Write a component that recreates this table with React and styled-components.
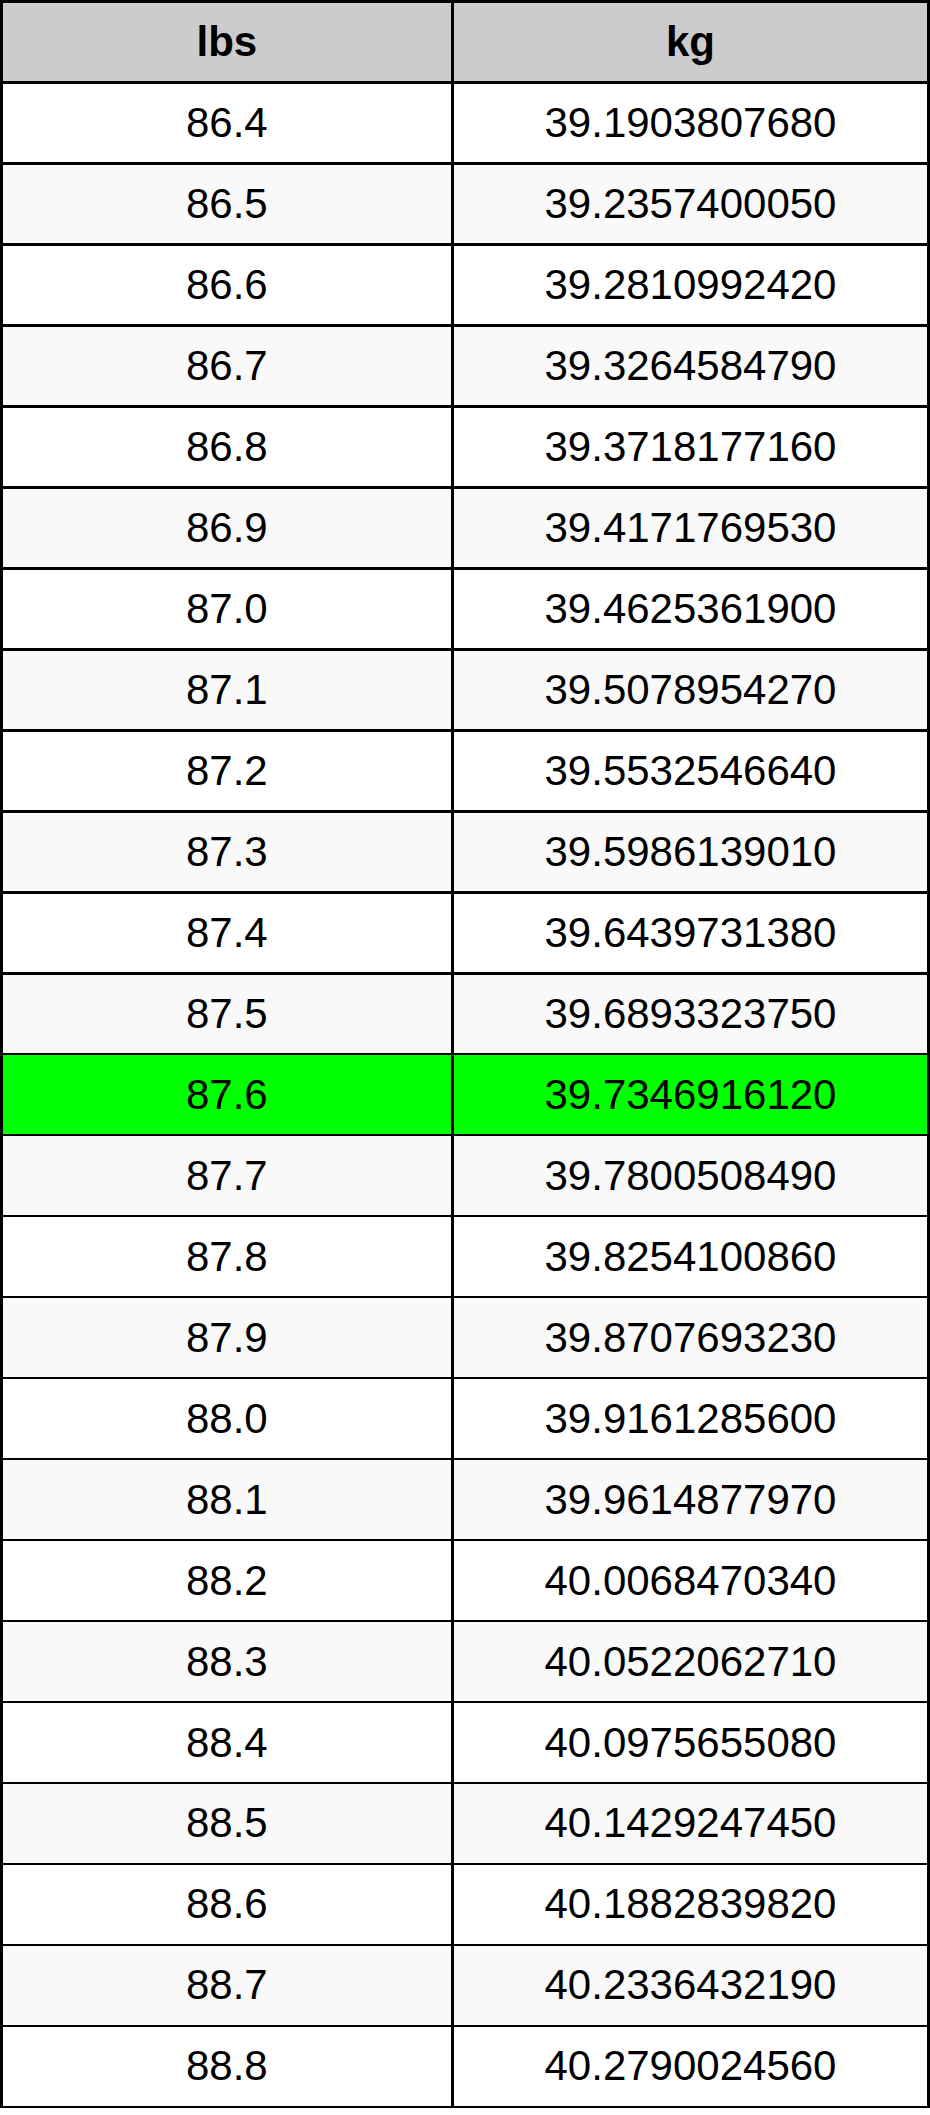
import React from 'react';
import styled, { createGlobalStyle } from 'styled-components';

const rows = [
    ['86.4', '39.1903807680'],
    ['86.5', '39.2357400050'],
    ['86.6', '39.2810992420'],
    ['86.7', '39.3264584790'],
    ['86.8', '39.3718177160'],
    ['86.9', '39.4171769530'],
    ['87.0', '39.4625361900'],
    ['87.1', '39.5078954270'],
    ['87.2', '39.5532546640'],
    ['87.3', '39.5986139010'],
    ['87.4', '39.6439731380'],
    ['87.5', '39.6893323750'],
    ['87.6', '39.7346916120'],
    ['87.7', '39.7800508490'],
    ['87.8', '39.8254100860'],
    ['87.9', '39.8707693230'],
    ['88.0', '39.9161285600'],
    ['88.1', '39.9614877970'],
    ['88.2', '40.0068470340'],
    ['88.3', '40.0522062710'],
    ['88.4', '40.0975655080'],
    ['88.5', '40.1429247450'],
    ['88.6', '40.1882839820'],
    ['88.7', '40.2336432190'],
    ['88.8', '40.2790024560'],
];

const HIGHLIGHT = '87.6';

const GlobalStyle = createGlobalStyle`
    html, body {
        margin: 0;
        padding: 0;
        background: #ffffff;
    }
    body {
        font-family: "Liberation Sans", Arial, Helvetica, sans-serif;
        color: #000000;
    }
`;

const Table = styled.div`
    display: grid;
    grid-template-columns: 448.3px 1fr;
    grid-template-rows: repeat(26, 1fr);
    gap: 2.7px;
    padding: 2.7px;
    width: 930px;
    height: 2108.3px;
    box-sizing: border-box;
    background-color: #000000;
`;

const Cell = styled.div`
    display: flex;
    align-items: center;
    justify-content: center;
    font-size: 42px;
    line-height: 1;
    font-weight: ${p => (p.$head ? 'bold' : 'normal')};
    background-color: ${p => p.$bg};
`;

const rowColour = (lbs, i) => {
    if (lbs === HIGHLIGHT) return '#00ff00';
    return i % 2 === 0 ? '#ffffff' : '#f9f9f9';
};

const App = () => {
    return (
        <>
            <GlobalStyle />
            <Table>
                <Cell $head $bg="#cccccc">lbs</Cell>
                <Cell $head $bg="#cccccc">kg</Cell>
                {rows.map(([lbs, kg], i) => (
                    <React.Fragment key={lbs}>
                        <Cell $bg={rowColour(lbs, i)}>{lbs}</Cell>
                        <Cell $bg={rowColour(lbs, i)}>{kg}</Cell>
                    </React.Fragment>
                ))}
            </Table>
        </>
    );
};

export default App;
